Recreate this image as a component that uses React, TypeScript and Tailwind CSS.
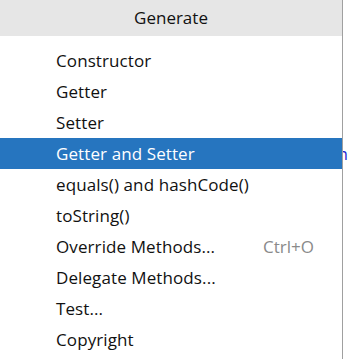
const items: { label: string; shortcut?: string }[] = [
  { label: 'Constructor' },
  { label: 'Getter' },
  { label: 'Setter' },
  { label: 'Getter and Setter' },
  { label: 'equals() and hashCode()' },
  { label: 'toString()' },
  { label: 'Override Methods...', shortcut: 'Ctrl+O' },
  { label: 'Delegate Methods...' },
  { label: 'Test...' },
  { label: 'Copyright' },
]

const selected = 3

export default function App() {
  return (
    <div
      className="flex w-[350px] h-[359px] bg-white overflow-hidden text-[#111]"
      style={{ fontFamily: '"Open Sans", "Noto Sans", sans-serif' }}
    >
      {/* popup */}
      <div className="relative z-10 w-[343px] shrink-0 border-r border-[#a0a0a0] bg-white">
        <div className="h-9 bg-[#e6e6e6] flex items-center justify-center text-[17px]">Generate</div>
        <div className="pt-[9px]">
          {items.map((item, i) => (
            <div
              key={item.label}
              className={`h-[31px] flex items-center pl-[56px] pr-7 pt-px text-[17px] tracking-[0.1px] ${
                i === selected ? 'bg-[#2675bf] text-white' : ''
              }`}
            >
              <span className="flex-1">{item.label}</span>
              {item.shortcut && <span className="text-[#8a8a8a] tracking-normal">{item.shortcut}</span>}
            </div>
          ))}
        </div>
      </div>

      {/* editor behind, mostly covered by the popup */}
      <div className="flex-1 pt-[138px]">
        <div className="relative -left-[5px] h-[31px] flex items-center text-[16px] text-[#2020d0]">n</div>
      </div>
    </div>
  )
}
